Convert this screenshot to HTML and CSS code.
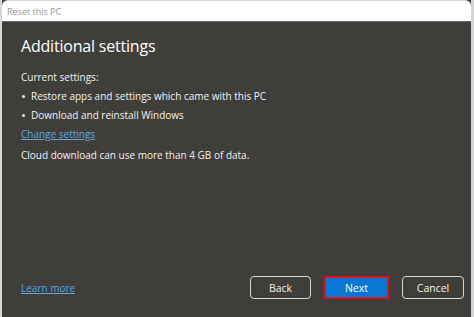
FILE: index.html
```html
<!DOCTYPE html>
<html lang="en">
<head>
    <meta charset="UTF-8">
    <meta name="viewport" content="width=device-width, initial-scale=1.0">
    <title>Reset this PC</title>
    <link rel="stylesheet" href="styles.css">
</head>
<body>
    <div class="window">
        <div class="titlebar">Reset this PC</div>
        <div class="content">
            <h1>Additional settings</h1>
            <p class="label">Current settings:</p>
            <ul class="settings">
                <li>Restore apps and settings which came with this PC</li>
                <li>Download and reinstall Windows</li>
            </ul>
            <a href="#" class="link">Change settings</a>
            <p class="note">Cloud download can use more than 4 GB of data.</p>
            <div class="footer">
                <a href="#" class="link">Learn more</a>
                <div class="buttons">
                    <button class="btn">Back</button>
                    <button class="btn primary">Next</button>
                    <button class="btn">Cancel</button>
                </div>
            </div>
        </div>
    </div>
</body>
</html>
```

FILE: styles.css
```css
body {
    margin: 0;
    padding: 0;
    background-color: #d6d6d6;
    font-family: "Open Sans", "Noto Sans", sans-serif;
    width: 474px;
    height: 317px;
    overflow: hidden;
}
.window {
    margin: 0 3px 0 2px;
    height: 317px;
    display: flex;
    flex-direction: column;
    background: #403e3a;
}
.titlebar {
    height: 22px;
    background: #fff;
    border-top: 1px solid #d4d4d4;
    border-radius: 6px 6px 0 0;
    box-sizing: border-box;
    color: #999;
    font-size: 9px;
    line-height: 21px;
    padding-left: 5px;
    border-bottom: 1px solid #6c6b68;
}
.content {
    flex: 1;
    display: flex;
    flex-direction: column;
    padding: 0 0 0 19px;
    color: #f2f2f2;
    font-size: 10px;
}
h1 {
    margin: 12px 0 0;
    font-size: 16px;
    letter-spacing: -0.2px;
    font-weight: 400;
    line-height: 24px;
    color: #fff;
}
.label {
    margin: 12px 0 0;
    line-height: 14px;
}
.settings {
    margin: 0;
    padding: 0;
    list-style: none;
}
.settings li {
    margin-top: 5px;
    line-height: 14px;
    padding-left: 10px;
    position: relative;
}
.settings li::before {
    content: "";
    position: absolute;
    left: 1px;
    top: 6px;
    width: 3px;
    height: 3px;
    border-radius: 50%;
    background: #e8e8e8;
}
.link {
    color: #5aa9e6;
    text-decoration: underline;
    line-height: 14px;
}
.content > .link {
    margin-top: 5px;
    align-self: flex-start;
}
.note {
    margin: 7px 0 0;
    line-height: 14px;
}
.footer {
    margin-top: auto;
    margin-bottom: 18px;
    display: flex;
    align-items: center;
    justify-content: space-between;
    padding-right: 7px;
}
.buttons {
    display: flex;
    gap: 13px;
}
.btn {
    font-family: inherit;
    font-size: 10.5px;
    width: 62px;
    height: 23px;
    background: #403e3a;
    color: #f2f2f2;
    border: 1px solid #d8d8d8;
    border-radius: 4px;
    padding: 0;
}
.btn:first-child {
    width: 61px;
}
.primary {
    width: 65px;
    background: #0a78d2;
    color: #fff;
    border: 2px solid #e0131b;
    border-radius: 0;
}
```
